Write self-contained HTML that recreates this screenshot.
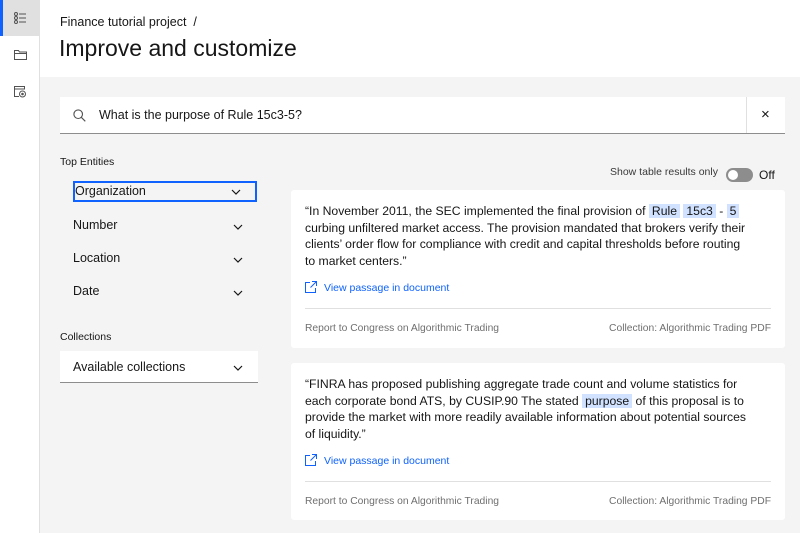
<!DOCTYPE html>
<html><head><style>
*{box-sizing:border-box;margin:0;padding:0}
body{width:800px;height:533px;overflow:hidden;font-family:"Liberation Sans",sans-serif;background:#f4f4f4;color:#161616;position:relative}
.side{position:absolute;left:0;top:0;width:40px;height:533px;background:#fff;border-right:1px solid #e0e0e0}
.side .act{position:absolute;left:0;top:0;width:39px;height:36px;background:#e0e0e0;border-left:3px solid #0f62fe}
.hdr{position:absolute;left:40px;top:0;width:760px;height:77px;background:#fff}
.abs{position:absolute}
.dd{position:absolute;left:73px;width:184px;height:21px;font-size:12.5px;color:#161616}
.dd svg{position:absolute;right:14px;top:6px}
.card{position:absolute;left:291px;width:494px;background:#fff;border-radius:3px}
.q{position:absolute;left:14px;top:13px;font-size:12.2px;line-height:16.5px;color:#161616}
.hl{background:#d0e2ff;padding:0 3px}
.link{position:absolute;left:14px;font-size:10.5px;color:#0f62fe}
.foot{position:absolute;left:14px;right:14px;font-size:10.3px;color:#6f6f6f;border-top:1px solid #e0e0e0;padding-top:14px;display:flex;justify-content:space-between}
</style></head><body>
<div class="side"><div class="act"></div>
<svg class="abs" style="left:13px;top:11px" width="14" height="14" viewBox="0 0 14 14" fill="none" stroke="#525252" stroke-width="1"><circle cx="3" cy="3" r="1.5"/><line x1="6" y1="3" x2="13" y2="3"/><circle cx="3" cy="7" r="1.5"/><line x1="6" y1="7" x2="13" y2="7"/><circle cx="3" cy="11" r="1.5"/><line x1="6" y1="11" x2="13" y2="11"/></svg>
<svg class="abs" style="left:14px;top:49px" width="13" height="11" viewBox="0 0 13 11" fill="none" stroke="#525252"><path d="M.5 1.5h4l1 1.5h7v7.5h-12z"/><line x1=".5" y1="4.5" x2="12.5" y2="4.5"/></svg>
<svg class="abs" style="left:14px;top:85px" width="13" height="13" viewBox="0 0 13 13" fill="none" stroke="#525252"><path d="M5 11.5H.5v-10h10v3"/><line x1=".5" y1="4" x2="10.5" y2="4"/><circle cx="8.5" cy="9" r="3"/><circle cx="8.5" cy="9" r=".8" fill="#525252"/></svg>
</div>
<div class="hdr">
<div class="abs" style="left:20px;top:15px;font-size:12.5px">Finance tutorial project &nbsp;/</div>
<div class="abs" style="left:19px;top:35px;font-size:23px">Improve and customize</div>
</div>
<div class="abs" style="left:60px;top:97px;width:725px;height:37px;background:#fff;border-bottom:1px solid #8d8d8d">
<svg class="abs" style="left:13px;top:12px" width="13" height="13" viewBox="0 0 13 13" fill="none" stroke="#525252" stroke-width="1.1"><circle cx="5.2" cy="5.2" r="4.3"/><line x1="8.3" y1="8.3" x2="12.3" y2="12.3"/></svg>
<div class="abs" style="left:39px;top:11px;font-size:12.5px">What is the purpose of Rule 15c3-5?</div>
<div class="abs" style="left:686px;top:0;width:1px;height:36px;background:#e0e0e0"></div>
<div class="abs" style="left:701px;top:9px;font-size:15px;color:#161616">×</div>
</div>
<div class="abs" style="left:60px;top:156px;font-size:10.5px">Top Entities</div>
<div class="dd" style="top:181px;border:2px solid #0f62fe;padding:1px 0 0 0">Organization<svg width="10" height="6" viewBox="0 0 10 6" fill="none" stroke="#161616" stroke-width="1.2"><path d="M1 1l4 4 4-4"/></svg></div>
<div class="dd" style="top:218px">Number<svg width="10" height="6" viewBox="0 0 10 6" fill="none" stroke="#161616" stroke-width="1.2"><path d="M1 1l4 4 4-4"/></svg></div>
<div class="dd" style="top:251px">Location<svg width="10" height="6" viewBox="0 0 10 6" fill="none" stroke="#161616" stroke-width="1.2"><path d="M1 1l4 4 4-4"/></svg></div>
<div class="dd" style="top:284px">Date<svg width="10" height="6" viewBox="0 0 10 6" fill="none" stroke="#161616" stroke-width="1.2"><path d="M1 1l4 4 4-4"/></svg></div>
<div class="abs" style="left:60px;top:331px;font-size:10.5px">Collections</div>
<div class="abs" style="left:60px;top:351px;width:198px;height:32px;background:#fff;border-bottom:1px solid #8d8d8d;font-size:12.5px;padding:9px 0 0 13px">Available collections
<svg class="abs" style="right:15px;top:14px" width="10" height="6" viewBox="0 0 10 6" fill="none" stroke="#161616" stroke-width="1.2"><path d="M1 1l4 4 4-4"/></svg></div>
<div class="abs" style="left:610px;top:166px;font-size:10.5px;color:#393939">Show table results only</div>
<div class="abs" style="left:726px;top:168px;width:27px;height:14px;border-radius:7px;background:#8d8d8d"><div class="abs" style="left:2px;top:2px;width:10px;height:10px;border-radius:5px;background:#fff"></div></div>
<div class="abs" style="left:759px;top:168px;font-size:12px">Off</div>
<div class="card" style="top:190px;height:158px">
<div class="q" style="width:448px">“In November 2011, the SEC implemented the final provision of <span class="hl">Rule</span> <span class="hl">15c3</span> - <span class="hl">5</span> curbing unfiltered market access. The provision mandated that brokers verify their clients’ order flow for compliance with credit and capital thresholds before routing to market centers.”</div>
<svg class="abs" style="left:14px;top:91px" width="12" height="12" viewBox="0 0 12 12" fill="none" stroke="#0f62fe"><path d="M5 1.5H.5v10h10V7M7 .5h4.5V5M11.5.5 5.5 6.5"/></svg>
<div class="link" style="left:33px;top:92px">View passage in document</div>
<div class="foot" style="top:118px"><span>Report to Congress on Algorithmic Trading</span><span>Collection: Algorithmic Trading PDF</span></div>
</div>
<div class="card" style="top:363px;height:157px">
<div class="q" style="width:442px">“FINRA has proposed publishing aggregate trade count and volume statistics for each corporate bond ATS, by CUSIP.90 The stated <span class="hl">purpose</span> of this proposal is to provide the market with more readily available information about potential sources of liquidity.”</div>
<svg class="abs" style="left:14px;top:91px" width="12" height="12" viewBox="0 0 12 12" fill="none" stroke="#0f62fe"><path d="M5 1.5H.5v10h10V7M7 .5h4.5V5M11.5.5 5.5 6.5"/></svg>
<div class="link" style="left:33px;top:92px">View passage in document</div>
<div class="foot" style="top:118px"><span>Report to Congress on Algorithmic Trading</span><span>Collection: Algorithmic Trading PDF</span></div>
</div>
</body></html>
